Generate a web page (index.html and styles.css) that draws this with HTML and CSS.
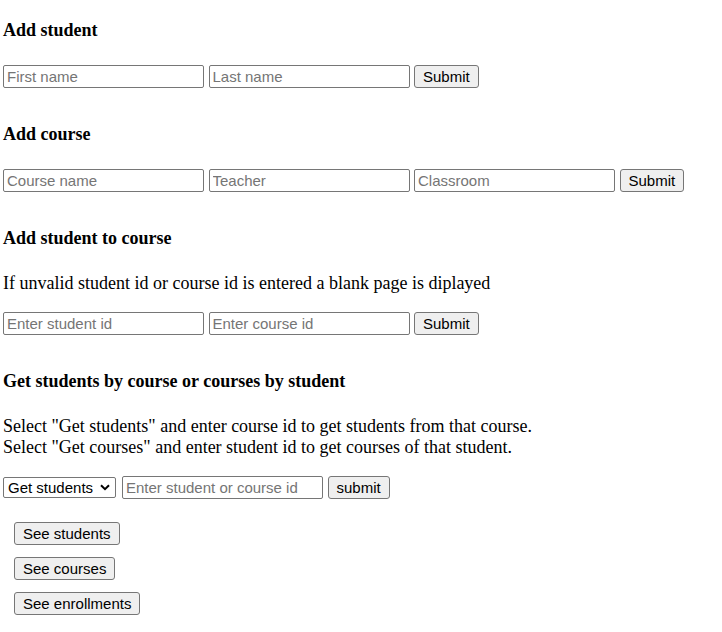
FILE: index.html
```html
<!DOCTYPE html>
<html lang="en">
  <head>
    <meta charset="UTF-8" />
    <meta name="viewport" content="width=device-width, initial-scale=1.0" />
    <title>Students and courses</title>
    <link rel="stylesheet" href="styles.css">
  </head>
  <body>
    <div class="block">
      <h4>Add student</h4>
      <form class="row">
        <input type="text" placeholder="First name" />
        <input type="text" placeholder="Last name" />
        <button type="button">Submit</button>
      </form>
    </div>
    <div class="block">
      <h4>Add course</h4>
      <form class="row">
        <input type="text" placeholder="Course name" />
        <input type="text" placeholder="Teacher" />
        <input type="text" placeholder="Classroom" />
        <button type="button">Submit</button>
      </form>
    </div>
    <div class="block">
      <h4>Add student to course</h4>
      <p>If unvalid student id or course id is entered a blank page is diplayed</p>
      <form class="row">
        <input type="text" placeholder="Enter student id" />
        <input type="text" placeholder="Enter course id" />
        <button type="button">Submit</button>
      </form>
    </div>
    <div class="block">
      <h4>Get students by course or courses by student</h4>
      <p>Select "Get students" and enter course id to get students from that course.<br>Select "Get courses" and enter student id to get courses of that student.</p>
      <form class="row">
        <span class="select-wrap">
          <select>
            <option>Get students</option>
            <option>Get courses</option>
          </select>
          <svg class="chevron" width="10" height="7" viewBox="0 0 10 7">
            <path d="M1 1.2 L5 5.2 L9 1.2" fill="none" stroke="#000" stroke-width="2" />
          </svg>
        </span>
        <input type="text" placeholder="Enter student or course id" />
        <button type="button">submit</button>
      </form>
    </div>
    <div class="links">
      <button type="button">See students</button>
      <button type="button">See courses</button>
      <button type="button">See enrollments</button>
    </div>
  </body>
</html>
```

FILE: styles.css
```css
html {
  background: #fff;
}
body {
  margin: 0;
  padding: 20px 0 0 3px;
  font-family: "Liberation Serif", "Times New Roman", serif;
  font-size: 18px;
  color: #000;
}
.block + .block {
  margin-top: 36px;
}
h4 {
  margin: 0 0 24px;
  font-size: 18px;
  font-weight: bold;
}
p {
  margin: 0 0 18px;
}
.row {
  display: flex;
  align-items: center;
  gap: 4.5px;
  margin: 0;
}
input,
select,
button {
  font-family: "Liberation Sans", Arial, sans-serif;
  font-size: 15px;
  color: #000;
  box-sizing: border-box;
  height: 23px;
  margin: 0;
}
input {
  width: 201px;
  padding: 0 3px;
  border: 1px solid #767676;
  border-radius: 2px;
  outline: none;
}
input::placeholder {
  color: #757575;
}
.select-wrap {
  position: relative;
  display: flex;
  margin-right: 1.5px;
}
select {
  appearance: none;
  width: 113px;
  height: 21px;
  padding: 0 0 0 4px;
  border: 1px solid #767676;
  border-radius: 2px;
  background: #fff;
  outline: none;
}
.chevron {
  position: absolute;
  right: 6px;
  top: 7px;
  pointer-events: none;
}
button {
  padding: 0 8px;
  border: 1px solid #767676;
  border-radius: 3px;
  background: #efefef;
}
.links {
  display: flex;
  flex-direction: column;
  align-items: flex-start;
  gap: 12px;
  margin-top: 23px;
  padding-left: 11px;
}
```
